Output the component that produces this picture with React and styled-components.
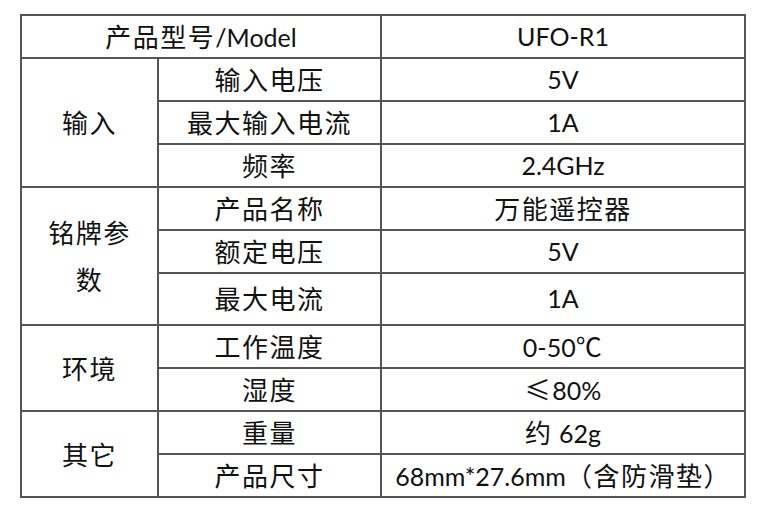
import React from 'react';
import styled, { createGlobalStyle } from 'styled-components';

const GlobalStyle = createGlobalStyle`
  html, body {
    margin: 0;
    padding: 0;
    background: #fff;
  }
`;

const Page = styled.div`
  width: 779px;
  height: 518px;
  padding: 14px 0 0 20px;
  box-sizing: border-box;
`;

const Table = styled.table`
  border-collapse: collapse;
  table-layout: fixed;
  width: 724px;
  border: 2px solid #555;
  font-family: 'Lato', 'Noto Sans CJK SC', sans-serif;
  font-size: 25px;
  color: #111;
`;

const Row = styled.tr`
  height: ${({ tall }) => (tall ? 52 : 43)}px;
`;

const Cell = styled.td`
  border: 2px solid #555;
  padding: 0;
  text-align: center;
  vertical-align: middle;
  line-height: 1.1;
  white-space: nowrap;
`;

const GroupCell = styled(Cell)`
  line-height: 45px;
  white-space: normal;
`;

const Han = styled.span`
  font-family: 'Noto Sans CJK SC', sans-serif;
  font-size: 26px;
  letter-spacing: 1.5px;
`;

const rows = [
  { group: '输入', span: 3, label: '输入电压', value: <>5V</> },
  { label: '最大输入电流', value: <>1A</> },
  { label: '频率', value: <>2.4GHz</> },
  { group: <>铭牌参<br />数</>, span: 3, label: '产品名称', value: <Han>万能遥控器</Han> },
  { label: '额定电压', value: <>5V</> },
  { label: '最大电流', value: <>1A</>, tall: true },
  { group: '环境', span: 2, label: '工作温度', value: <>0-50<Han>℃</Han></> },
  { label: '湿度', value: <><Han>≤</Han>80%</> },
  { group: '其它', span: 2, label: '重量', value: <><Han>约</Han> 62g</> },
  { label: '产品尺寸', value: <>68mm*27.6mm<Han>（含防滑垫）</Han></> },
];

export default function App() {
  return (
    <Page>
      <GlobalStyle />
      <Table>
        <colgroup>
          <col style={{ width: 137 }} />
          <col style={{ width: 223 }} />
          <col style={{ width: 364 }} />
        </colgroup>
        <tbody>
          <Row>
            <Cell colSpan={2}><Han>产品型号</Han>/Model</Cell>
            <Cell>UFO-R1</Cell>
          </Row>
          {rows.map((r, i) => (
            <Row key={i} tall={r.tall}>
              {r.group && (
                <GroupCell rowSpan={r.span}><Han>{r.group}</Han></GroupCell>
              )}
              <Cell><Han>{r.label}</Han></Cell>
              <Cell>{r.value}</Cell>
            </Row>
          ))}
        </tbody>
      </Table>
    </Page>
  );
}
